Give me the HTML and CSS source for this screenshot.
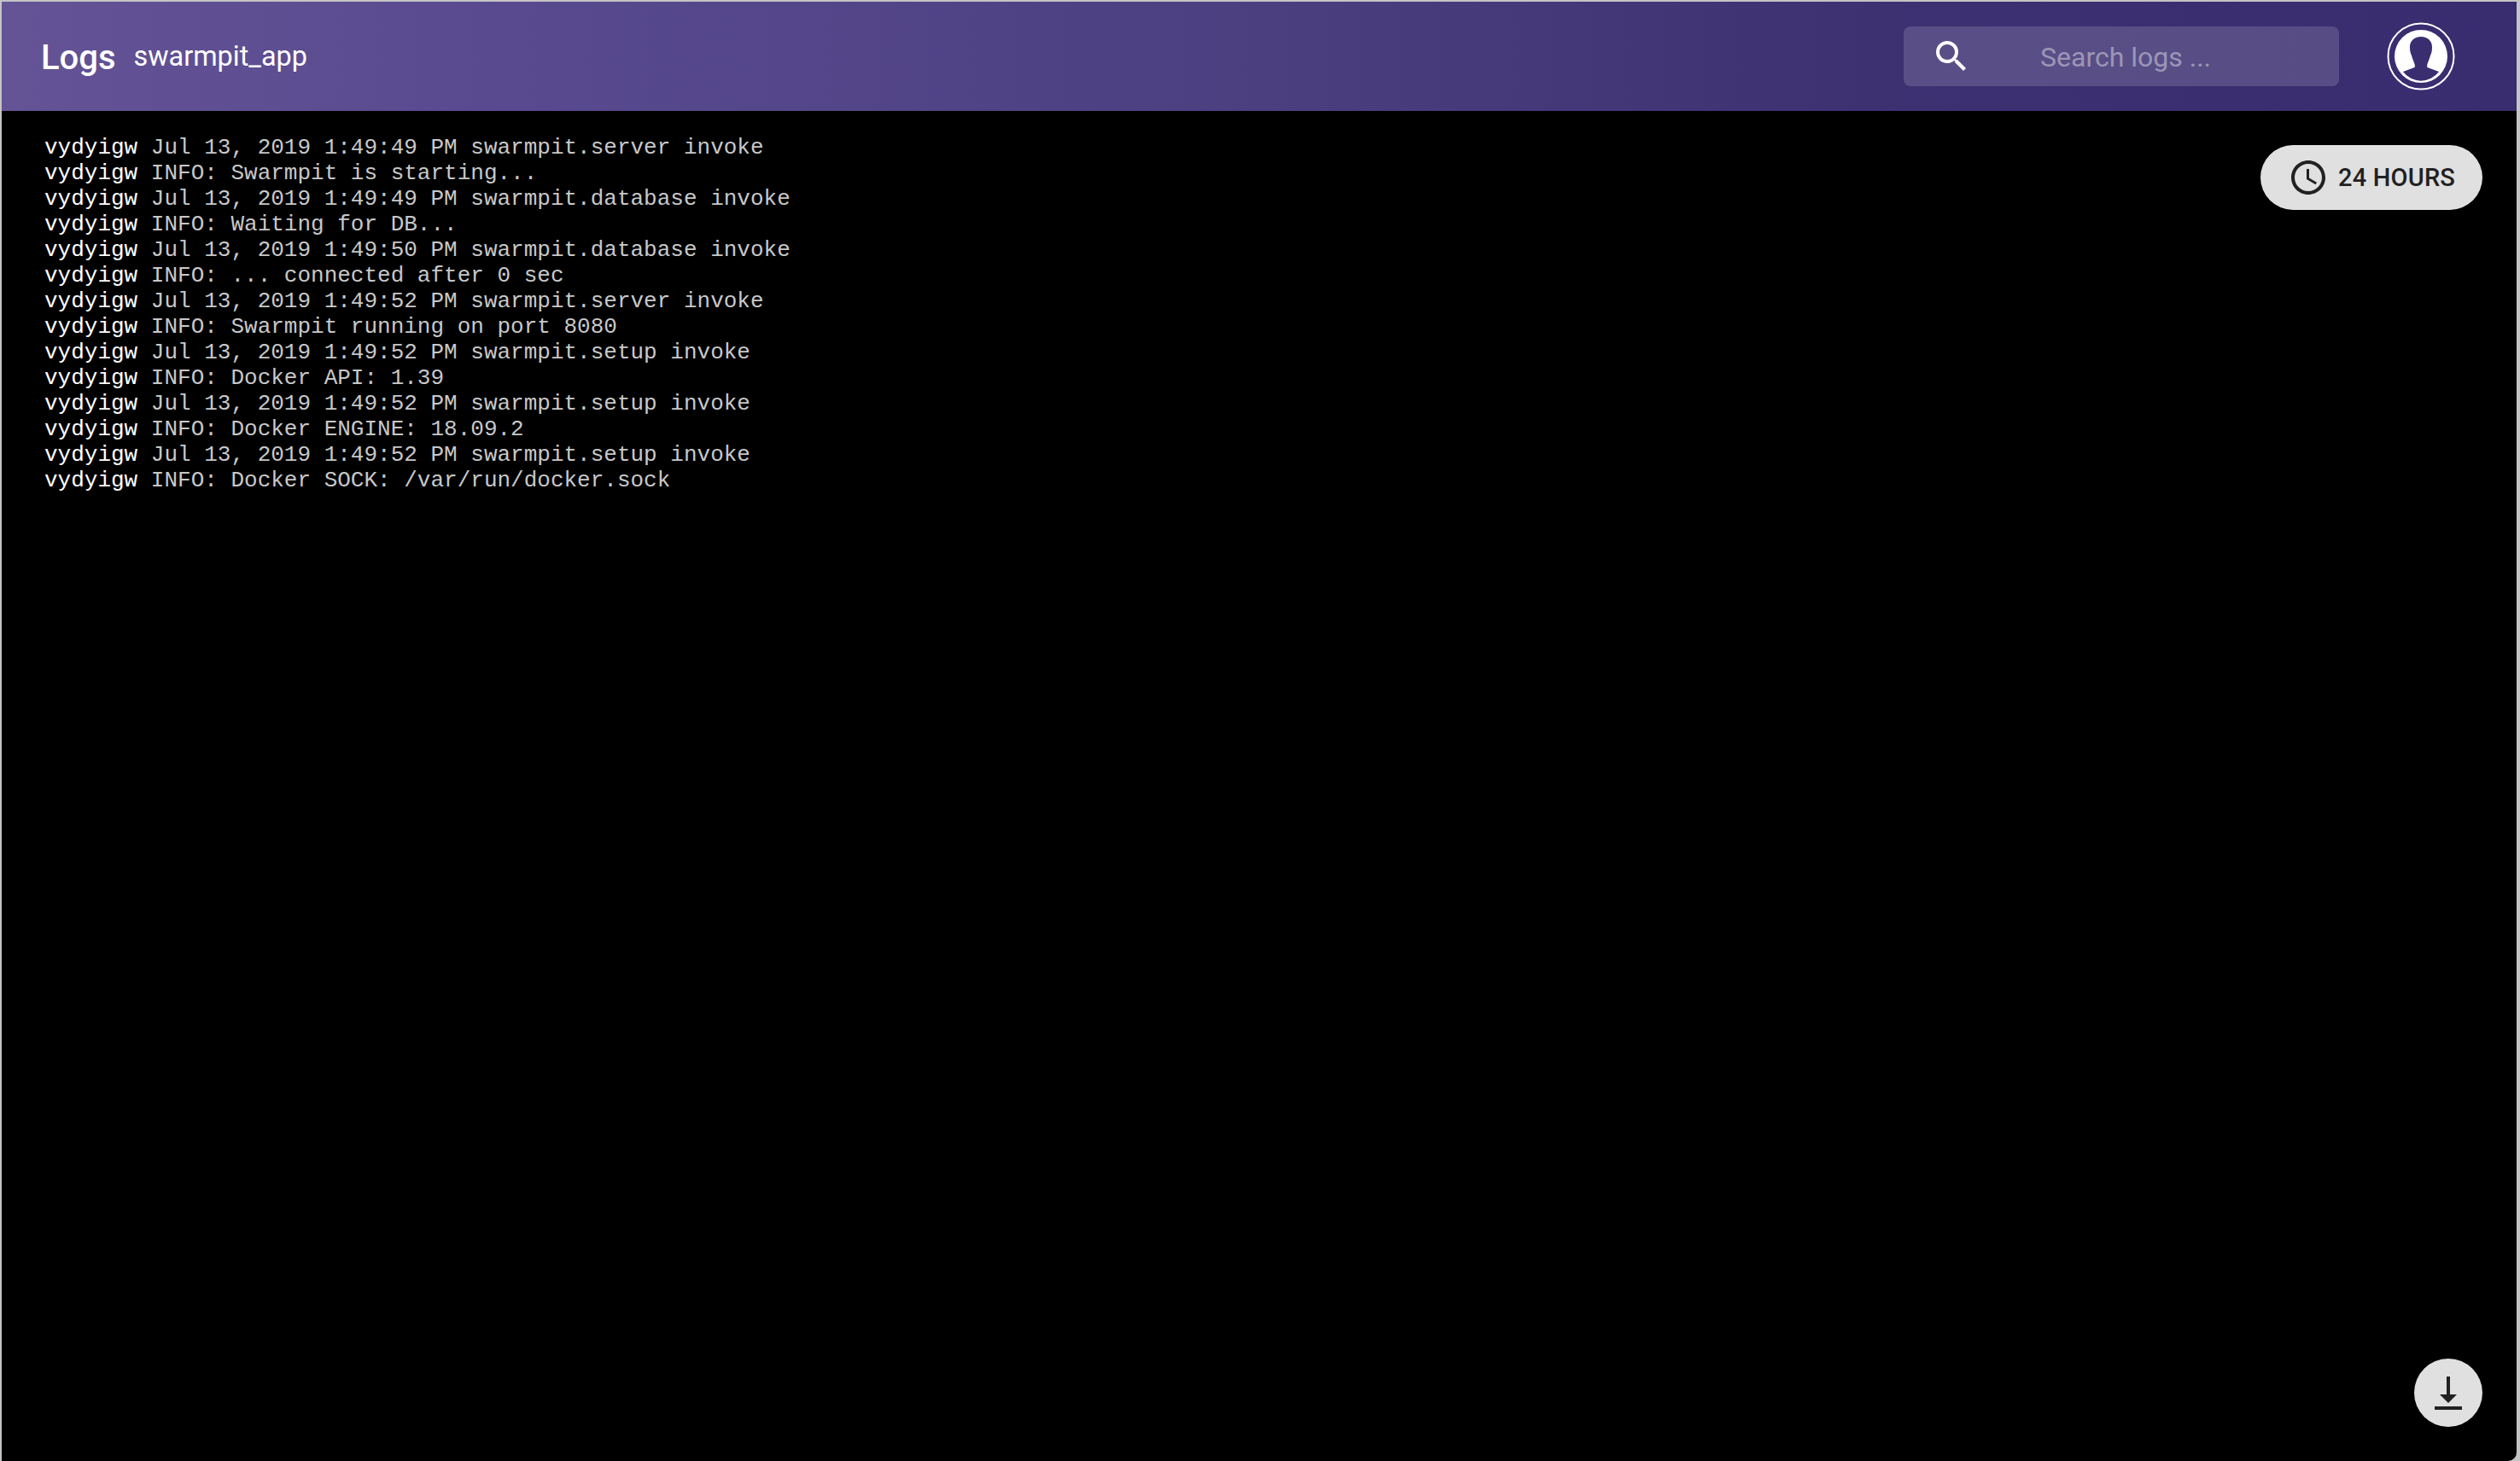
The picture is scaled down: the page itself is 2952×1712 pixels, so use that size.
FILE: index.html
```html
<!DOCTYPE html>
<html lang="en">
<head>
<meta charset="utf-8">
<title>Logs</title>
<link rel="stylesheet" href="styles.css">
</head>
<body>
<div class="window">
  <header class="appbar">
    <div class="titles">
      <h1 class="title">Logs</h1>
      <span class="subtitle">swarmpit_app</span>
    </div>
    <div class="actions">
      <div class="search">
        <svg class="search-icon" viewBox="0 0 24 24"><path fill="#fff" d="M15.500 14h-.79l-.28-.27A6.470 6.470 0 0 0 16 9.500 6.500 6.500 0 1 0 9.500 16c1.610 0 3.090-.59 4.230-1.570l.27.28v.79l5 4.990L20.490 19l-4.990-5zm-6 0C7.010 14 5 11.990 5 9.500S7.010 5 9.500 5 14 7.010 14 9.500 11.990 14 9.500 14z"/></svg>
        <span class="placeholder">Search logs ...</span>
      </div>
      <div class="avatar">
        <svg viewBox="0 0 80 80" class="avatar-svg">
          <circle cx="40" cy="40" r="38.500" fill="none" stroke="#fff" stroke-width="2"/>
          <circle cx="40" cy="40" r="31" fill="#fff"/>
          <path fill="#3a2d70" d="M40 17C32 17 27 22 27 29C27 33 27.500 36 29 39C30 43 32 47 32.500 49C33 51 33 52 32.500 53L19 58A26 26 0 0 0 61 58L47.500 53C47 52 47 51 47.500 49C48 47 50 43 51 39C52.500 36 53 33 53 29C53 22 48 17 40 17Z"/>
        </svg>
      </div>
    </div>
  </header>
  <main class="console">
    <div class="log">
      <div class="line"><span class="task">vydyigw</span> Jul 13, 2019 1:49:49 PM swarmpit.server invoke</div>
      <div class="line"><span class="task">vydyigw</span> INFO: Swarmpit is starting...</div>
      <div class="line"><span class="task">vydyigw</span> Jul 13, 2019 1:49:49 PM swarmpit.database invoke</div>
      <div class="line"><span class="task">vydyigw</span> INFO: Waiting for DB...</div>
      <div class="line"><span class="task">vydyigw</span> Jul 13, 2019 1:49:50 PM swarmpit.database invoke</div>
      <div class="line"><span class="task">vydyigw</span> INFO: ... connected after 0 sec</div>
      <div class="line"><span class="task">vydyigw</span> Jul 13, 2019 1:49:52 PM swarmpit.server invoke</div>
      <div class="line"><span class="task">vydyigw</span> INFO: Swarmpit running on port 8080</div>
      <div class="line"><span class="task">vydyigw</span> Jul 13, 2019 1:49:52 PM swarmpit.setup invoke</div>
      <div class="line"><span class="task">vydyigw</span> INFO: Docker API: 1.39</div>
      <div class="line"><span class="task">vydyigw</span> Jul 13, 2019 1:49:52 PM swarmpit.setup invoke</div>
      <div class="line"><span class="task">vydyigw</span> INFO: Docker ENGINE: 18.09.2</div>
      <div class="line"><span class="task">vydyigw</span> Jul 13, 2019 1:49:52 PM swarmpit.setup invoke</div>
      <div class="line"><span class="task">vydyigw</span> INFO: Docker SOCK: /var/run/docker.sock</div>
    </div>
    <div class="chip">
      <svg class="chip-icon" viewBox="0 0 24 24"><path fill="#212121" d="M11.990 2C6.470 2 2 6.480 2 12s4.470 10 9.990 10C17.520 22 22 17.520 22 12S17.520 2 11.990 2zM12 20c-4.420 0-8-3.580-8-8s3.580-8 8-8 8 3.580 8 8-3.580 8-8 8zm.5-13H11v6l5.250 3.150.75-1.230-4.500-2.670z"/></svg>
      <span class="chip-label">24 HOURS</span>
    </div>
    <div class="fab">
      <svg class="fab-icon" viewBox="0 0 48 48"><path fill="#212121" d="M22 5h4v21h8l-10 10-10-10h8zM8 40h32v4H8z"/></svg>
    </div>
  </main>
</div>
</body>
</html>
```
FILE: styles.css
```css
* { box-sizing: border-box; }
html, body { margin: 0; height: 100%; background: #c4c4c4; }
body { overflow: hidden; padding: 2px 4px 0 2px; }
.window { height: 100%; display: flex; flex-direction: column; background: #000; border-bottom-right-radius: 10px; overflow: hidden; }
.appbar { flex: 0 0 128px; display: flex; align-items: center; justify-content: space-between; padding: 0 72px 0 46px; background: linear-gradient(90deg, #645395 0%, #5a4b90 17%, #4b3f80 50%, #3d3172 74%, #392c6f 100%); color: #fff; font-family: Roboto, sans-serif; }
.titles { display: flex; align-items: center; gap: 21px; }
.title { margin: 0; font-size: 40px; font-weight: 500; line-height: 48px; position: relative; top: 2px; }
.subtitle { font-size: 32.400px; font-weight: 400; line-height: 40px; }
.actions { display: flex; align-items: center; gap: 56px; }
.search { width: 510px; height: 70px; border-radius: 8px; background: rgba(255,255,255,.15); display: flex; align-items: center; padding-left: 32px; }
.search-icon { width: 48px; height: 48px; }
.placeholder { margin-left: 80px; font-size: 32px; color: rgba(255,255,255,.42); position: relative; top: 1px; }
.avatar { width: 80px; height: 80px; }
.avatar-svg { display: block; width: 80px; height: 80px; }
.console { flex: 1; position: relative; padding: 28px 50px; }
.log { font-family: "Liberation Mono", monospace; font-size: 26px; line-height: 30px; color: #c8c8c8; }
.line { white-space: pre; }
.task { color: #fff; }
.chip { position: absolute; top: 40px; right: 40px; height: 76px; width: 260px; border-radius: 38px; background: #e0e0e0; display: flex; align-items: center; padding-left: 32px; gap: 11px; color: #212121; font-family: Roboto, sans-serif; }
.chip-icon { width: 48px; height: 48px; }
.chip-label { font-size: 29px; font-weight: 500; letter-spacing: .2px; }
.fab { position: absolute; right: 40px; bottom: 40px; width: 80px; height: 80px; border-radius: 50%; background: #e0e0e0; display: flex; align-items: center; justify-content: center; }
.fab-icon { width: 48px; height: 48px; }
```
